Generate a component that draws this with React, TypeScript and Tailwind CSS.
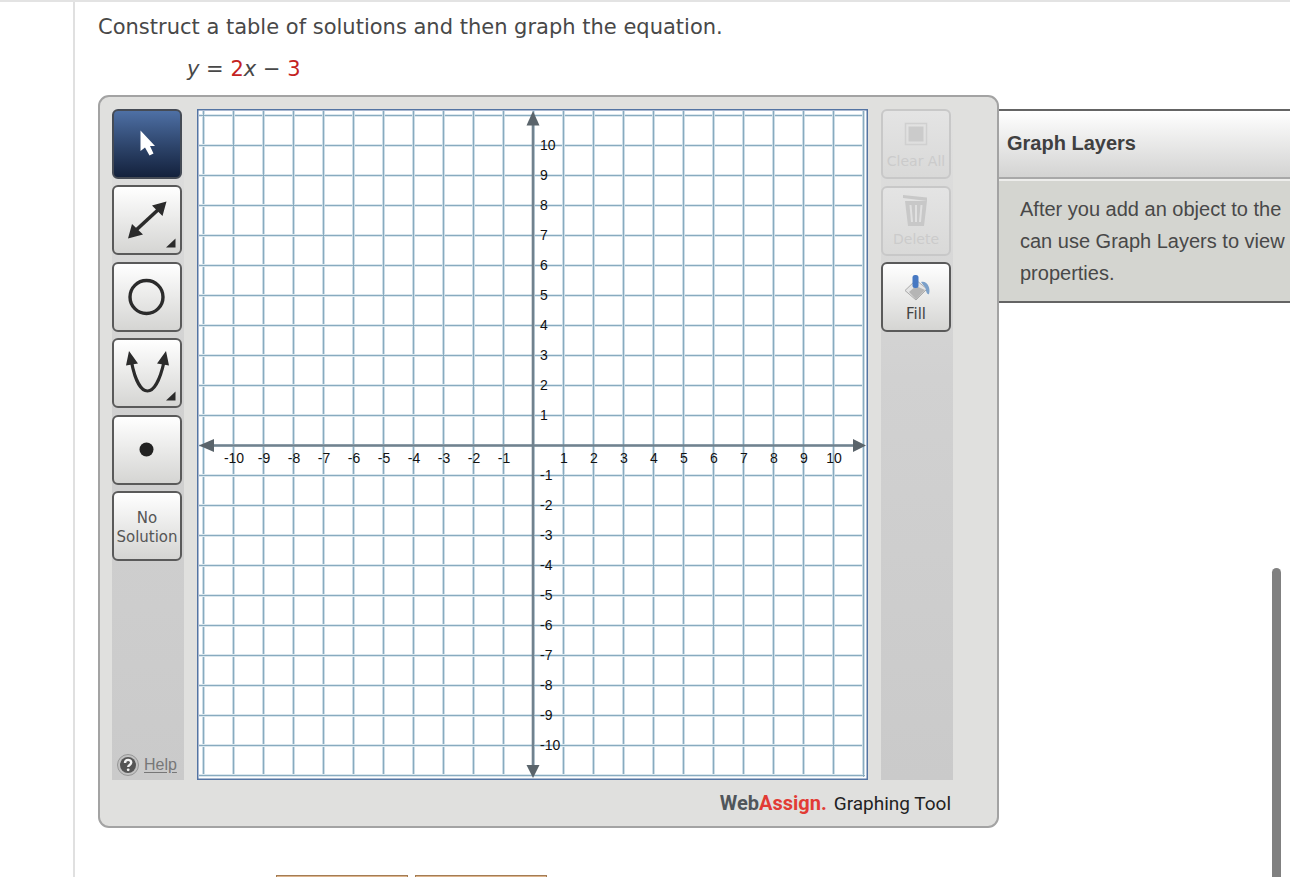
import type { ReactNode } from "react";

const SIZE = 671;
const ORIGIN = 336;
const UNIT = 30;

const gridLines = Array.from({ length: 23 }, (_, i) => i - 11);
const ticks = Array.from({ length: 21 }, (_, i) => i - 10).filter((n) => n !== 0);

function Graph() {
  return (
    <svg
      width={SIZE}
      height={SIZE}
      viewBox={`0 0 ${SIZE} ${SIZE}`}
      role="img"
      aria-label="Coordinate plane"
      className="block shrink-0 bg-white"
    >
      {gridLines.map((n) => {
        const p = ORIGIN + n * UNIT + 0.5;
        return (
          <g key={n}>
            <path d={`M${p} 2V668`} stroke="#cddde7" strokeWidth="3" />
            <path d={`M2 ${p}H668`} stroke="#dbe7ee" strokeWidth="3" />
            <path d={`M${p} 2V668M2 ${p}H668`} stroke="#88abbf" strokeWidth="1" />
          </g>
        );
      })}
      <path d={`M${ORIGIN} 10V660M10 ${ORIGIN + 0.5}H660`} stroke="#71828e" strokeWidth="2.6" />
      <g fill="#5a646b">
        <path d="M336 2L342.500 16.500H329.500Z" />
        <path d="M336 669L342.500 656H329.500Z" />
        <path d="M2 336.500L17 330V343Z" />
        <path d="M669 336.500L656 330V343Z" />
      </g>
      <g fill="#111" fontFamily="'Liberation Sans', Arial, sans-serif" fontSize="14">
        {ticks.map((n) => (
          <text key={`x${n}`} x={ORIGIN + 1 + n * UNIT} y={354} textAnchor="middle">
            {n}
          </text>
        ))}
        {ticks.map((n) => (
          <text key={`y${n}`} x={343} y={ORIGIN + 5 - n * UNIT}>
            {n}
          </text>
        ))}
      </g>
      <rect x="0.750" y="0.750" width="669.500" height="669.500" fill="none" stroke="#5474a3" strokeWidth="1.500" />
    </svg>
  );
}

type ToolProps = {
  label: string;
  children: ReactNode;
  active?: boolean;
  disabled?: boolean;
};

function Tool({ label, children, active, disabled }: ToolProps) {
  const look = active
    ? "border-[#454b55] bg-linear-to-b from-[#4e70a5] to-[#14223d] text-white"
    : disabled
      ? "border-[#c8c8c8] bg-linear-to-b from-[#e4e4e4] to-[#d9d9d8] text-[#cbcbcb]"
      : "border-[#5a5a5a] bg-linear-to-b from-white to-[#d5d5d3] text-[#555]";
  return (
    <button
      type="button"
      aria-label={label}
      disabled={disabled}
      className={`flex size-[70px] shrink-0 flex-col items-center justify-center overflow-hidden rounded-md border-2 font-['DejaVu_Sans',sans-serif] leading-[19px] ${look}`}
    >
      {children}
    </button>
  );
}

function ToolIcon({ children }: { children: ReactNode }) {
  return (
    <svg width="66" height="66" viewBox="0 0 66 66" fill="none" aria-hidden="true">
      {children}
    </svg>
  );
}

export default function App() {
  return (
    <div className="relative flex h-screen overflow-hidden border-t-2 border-[#e3e3e3] bg-white font-['Liberation_Sans',Arial,sans-serif] text-[#484848]">
      <main className="ml-[73px] min-w-0 flex-1 border-l-2 border-[#e0e0e0] pl-[23px]">
        <div className="pt-3 font-['DejaVu_Sans',Verdana,sans-serif] text-[21px] leading-[26px]">
          <p className="whitespace-nowrap">Construct a table of solutions and then graph the equation.</p>
          <p className="mt-4 pl-[89px]">
            <i>y</i> = <span className="text-[#c4231f]">2</span>
            <i>x</i> − <span className="text-[#c4231f]">3</span>
          </p>
        </div>

        <div className="mt-[13px] flex items-start">
          <section className="shrink-0 rounded-[11px] border-2 border-[#a3a3a3] bg-[#e0e0de] pt-3 pr-11 pb-2 pl-3">
            <div className="flex">
              <div className="flex w-[72px] flex-col justify-between bg-linear-to-b from-[#e0e0df] via-[#d1d1d1] via-40% to-[#cacaca]">
                <div className="flex h-[452px] flex-col justify-between">
                  <Tool label="Select" active>
                    <ToolIcon>
                      <path
                        d="M26.500 19.500V40L31 36.500L35.500 44.500L39.500 42.500L36 35H41Z"
                        fill="#fff"
                      />
                    </ToolIcon>
                  </Tool>
                  <Tool label="Line">
                    <ToolIcon>
                      <path d="M20 45L46 21" stroke="#2b2b2b" strokeWidth="3.600" />
                      <path d="M14 51.500L18 37L29 47.500ZM52.500 14.500L38 18.500L48.500 29Z" fill="#2b2b2b" />
                      <path d="M61.500 51.500V60.500H52Z" fill="#2b2b2b" />
                    </ToolIcon>
                  </Tool>
                  <Tool label="Circle">
                    <ToolIcon>
                      <circle cx="32.500" cy="33" r="16.500" stroke="#2b2b2b" strokeWidth="3.400" />
                    </ToolIcon>
                  </Tool>
                  <Tool label="Parabola">
                    <ToolIcon>
                      <path
                        d="M17.500 22C21 40 27 51 33.500 51C40 51 46 40 50 22"
                        stroke="#2b2b2b"
                        strokeWidth="3.200"
                      />
                      <path d="M15 11L12 25.500L24 23.500ZM52 11L43 23.500L55 25.500Z" fill="#2b2b2b" />
                      <path d="M61.500 51.500V60.500H52Z" fill="#2b2b2b" />
                    </ToolIcon>
                  </Tool>
                  <Tool label="Point">
                    <ToolIcon>
                      <circle cx="32.500" cy="32.500" r="7" fill="#222" />
                    </ToolIcon>
                  </Tool>
                  <Tool label="No Solution">
                    <span className="pt-1 text-[15px]">No</span>
                    <span className="text-[15px]">Solution</span>
                  </Tool>
                </div>
                <a href="#help" className="mb-[3px] flex items-center gap-1 pl-1 text-[#777]">
                  <svg width="24" height="24" viewBox="0 0 24 24" aria-hidden="true">
                    <circle cx="12" cy="12" r="10.500" fill="#c2c2c2" stroke="#969696" />
                    <circle cx="12" cy="12" r="8" fill="#555" />
                    <path
                      d="M9 10C9 5.800 15.200 6 15.200 9.500C15.200 12 12.200 11.800 12.200 14"
                      fill="none"
                      stroke="#f4f4f4"
                      strokeWidth="2.400"
                    />
                    <circle cx="12.200" cy="16.800" r="1.400" fill="#f4f4f4" />
                  </svg>
                  <span className="text-base leading-6 underline underline-offset-2">Help</span>
                </a>
              </div>

              <div className="mx-[13px]">
                <Graph />
              </div>

              <div className="w-[72px] bg-linear-to-b from-[#e0e0df] via-[#d1d1d1] via-40% to-[#cacaca]">
                <div className="flex h-[223px] flex-col justify-between">
                  <Tool label="Clear All" disabled>
                    <svg width="24" height="24" viewBox="0 0 24 24" className="mt-1 mb-[6px]" aria-hidden="true">
                      <rect x="1.500" y="1.500" width="21" height="21" fill="none" stroke="#d0d0d0" strokeWidth="1.500" />
                      <rect x="4.500" y="4.500" width="15" height="15" fill="#cbcbcb" />
                    </svg>
                    <span className="text-sm leading-[19px] whitespace-nowrap">Clear All</span>
                  </Tool>
                  <Tool label="Delete" disabled>
                    <svg width="28" height="34" viewBox="0 0 28 34" className="mb-[3px]" aria-hidden="true">
                      <path d="M1 2L25 4.500V8L1 5Z" fill="#c8c8c8" />
                      <path d="M3 8H25L22 33H6Z" fill="#c8c8c8" />
                      <path d="M8.500 12L10 29M14 12V29M19.500 12L18 29" stroke="#e0e0e0" strokeWidth="2" />
                    </svg>
                    <span className="text-sm leading-[19px]">Delete</span>
                  </Tool>
                  <Tool label="Fill">
                    <svg width="30" height="28" viewBox="0 0 30 28" className="mt-[3px] mb-[3px]" aria-hidden="true">
                      <path d="M15 6L26 15L15 26L4 16.500Z" fill="#e4e4e4" stroke="#aaa" />
                      <path d="M8 18L15 12L24 16L15 25.500Z" fill="#b5b5b5" />
                      <path d="M20 8C26 6 30 14 28 20C26.500 21 25 18 24.500 14Z" fill="#7ba0c9" />
                      <rect x="11.500" y="1" width="6" height="13" rx="2.500" fill="#4778c2" />
                    </svg>
                    <span className="text-[15px] text-[#444]">Fill</span>
                  </Tool>
                </div>
              </div>
            </div>
            <p className="mt-2 flex h-[30px] items-baseline justify-end gap-[7px] pr-[2px] font-['Roboto',sans-serif] leading-[30px] text-[#222]">
              <b className="text-xl leading-[30px] text-[#50565b]">
                Web<span className="text-[#e23b35]">Assign.</span>
              </b>
              <span className="text-[19px]">Graphing Tool</span>
            </p>
          </section>

          <aside className="mt-[14px] min-w-0 flex-1 overflow-hidden border-y-2 border-[#646464] whitespace-nowrap">
            <h2 className="border-b-2 border-[#a8a8a8] bg-linear-to-b from-white to-[#d3d3d2] pt-4 pb-[18px] pl-2 text-xl leading-8 font-bold text-[#404040]">
              Graph Layers
            </h2>
            <p className="border-t-2 border-[#ededeb] bg-[#d4d5d0] py-3 pl-[21px] text-xl leading-8">
              After you add an object to the
              <br />
              can use Graph Layers to view
              <br />
              properties.
            </p>
          </aside>
        </div>

        <div className="mt-[47px] flex gap-[7px] pl-[178px]">
          <button type="button" aria-label="First action" className="h-9 w-[132px] border border-[#a47c54] bg-[#dcb48c]" />
          <button type="button" aria-label="Second action" className="h-9 w-[132px] border border-[#a47c54] bg-[#dcb48c]" />
        </div>
      </main>
      <div className="absolute right-[9px] bottom-0 h-[309px] w-[9px] rounded-t-full bg-[#808080]" />
    </div>
  );
}
